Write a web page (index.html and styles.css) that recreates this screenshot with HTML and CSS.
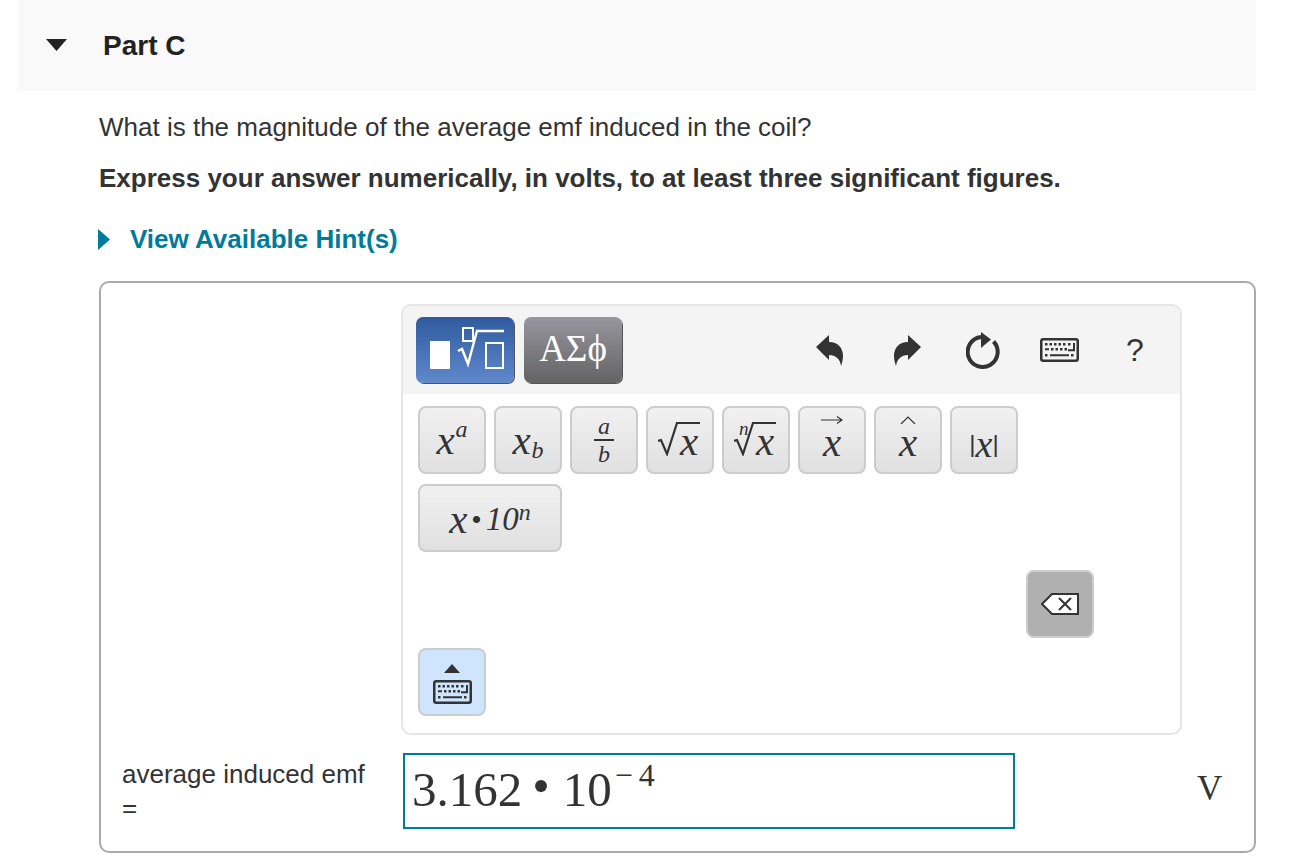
FILE: index.html

```html
<!DOCTYPE html>
<html lang="en">
<head>
  <meta charset="UTF-8" />
  <title>Part C</title>
  <link rel="stylesheet" href="styles.css">
</head>
<body>
  <svg class="defs" width="0" height="0">
    <symbol id="kbd" viewBox="0 0 39 24">
      <rect x="1.250" y="1.250" width="36.500" height="21.500" rx="2" fill="none" stroke="#333" stroke-width="2.500"/>
      <path d="M5 5h2.500v2.500H5zM9.500 5H12v2.500H9.500zM14 5h2.500v2.500H14zM18.500 5H21v2.500h-2.500zM23 5h2.500v2.500H23zM28 5h2.500v2.500H28zM11 10h2.500v2.500H11zM15.500 10H18v2.500h-2.500zM20 10h2.500v2.500H20zM24.500 10H27v2.500h-2.500zM5 16h2.500v2.500H5zM31 16h2.500v2.500H31z" fill="#333"/>
      <path d="M5 11.200h4M28 12.200h6V5M10 17.200h19" fill="none" stroke="#333" stroke-width="2"/>
    </symbol>
  </svg>

  <header class="part-head">
    <svg class="part-arrow" width="21" height="12" viewBox="0 0 21 12"><path d="M0 0h21L10.500 12z" fill="#222"/></svg>
    <h2>Part C</h2>
  </header>

  <main class="part-body">
    <p class="question">What is the magnitude of the average emf induced in the coil?</p>
    <p class="instruction">Express your answer numerically, in volts, to at least three significant figures.</p>
    <div class="hint">
      <svg width="12" height="21" viewBox="0 0 12 21"><path d="M0 0l12 10.500L0 21z" fill="#007b9b"/></svg>
      <span>View Available Hint(s)</span>
    </div>

    <section class="answer-box">
      <div class="palette">
        <div class="toolbar">
          <button class="tab tab-math">
            <svg width="98" height="66" viewBox="0 0 98 66">
              <rect x="14" y="24" width="20" height="28" fill="#fff"/>
              <rect x="47" y="11" width="10" height="13" fill="none" stroke="#fff" stroke-width="2"/>
              <rect x="70" y="26" width="17" height="25" fill="none" stroke="#fff" stroke-width="2"/>
              <path d="M42 34l4-2 6 15 9-33h27" fill="none" stroke="#fff" stroke-width="2.400"/>
            </svg>
          </button>
          <button class="tab tab-greek">ΑΣϕ</button>
          <div class="tools">
            <svg class="tool-undo" width="28" height="32" viewBox="0 0 28 32"><path d="M0 13L13 1v7c9 0 14 6 14 14 0 4-1 7-2 10-1-7-5-11-12-11v5z" fill="#333"/></svg>
            <svg class="tool-redo" width="28" height="32" viewBox="0 0 28 32"><path d="M28 13L15 1v7C6 8 1 14 1 22c0 4 1 7 2 10 1-7 5-11 12-11v5z" fill="#333"/></svg>
            <svg class="tool-reset" width="34" height="38" viewBox="0 0 34 38"><path d="M27.500 9.500A15 15 0 1 1 15 5" fill="none" stroke="#333" stroke-width="4"/><path d="M15 0l10 7.500L15 16z" fill="#333"/></svg>
            <svg class="tool-kbd" width="39" height="24"><use href="#kbd"/></svg>
            <span class="tool-help">?</span>
          </div>
        </div>

        <div class="keys">
          <div class="key-row">
            <button class="key"><span class="mi big">x</span><sup class="mi">a</sup></button>
            <button class="key"><span class="mi big">x</span><sub class="mi">b</sub></button>
            <button class="key"><span class="frac mi"><span class="num">a</span><span>b</span></span></button>
            <button class="key"><span class="root"><svg width="42" height="34" viewBox="0 0 42 34"><path d="M0 19l3-1 6 14L19 1h23" fill="none" stroke="#333" stroke-width="2.200"/></svg><span class="mi big radicand">x</span></span></button>
            <button class="key"><span class="root"><sup class="mi root-n">n</sup><svg width="42" height="34" viewBox="0 0 42 34"><path d="M0 19l3-1 6 14L19 1h23" fill="none" stroke="#333" stroke-width="2.200"/></svg><span class="mi big radicand">x</span></span></button>
            <button class="key"><span class="accent"><svg width="22" height="8" viewBox="0 0 22 8"><path d="M0 4h21M16 0.500l5 3.500-5 3.500" fill="none" stroke="#333" stroke-width="1.200"/></svg><span class="mi big">x</span></span></button>
            <button class="key"><span class="accent"><svg width="16" height="8" viewBox="0 0 16 8"><path d="M1 8l7-7 7 7" fill="none" stroke="#333" stroke-width="1.200"/></svg><span class="mi big">x</span></span></button>
            <button class="key abs"><span class="bar">|</span><span class="mi">x</span><span class="bar">|</span></button>
          </div>
          <div class="key-row">
            <button class="key key-wide"><span class="mi big">x</span><span class="dot">•</span><span class="mi ten">10</span><sup class="mi">n</sup></button>
          </div>
          <div class="key-row key-row-end">
            <button class="key key-delete">
              <svg width="38" height="22" viewBox="0 0 38 22"><path d="M1 11L11 1h26v20H11z" fill="#fff" stroke="#333" stroke-width="2"/><path d="M18 5l12 12M30 5L18 17" stroke="#333" stroke-width="2"/></svg>
            </button>
          </div>
          <div class="key-row">
            <button class="key key-toggle">
              <svg width="16" height="9" viewBox="0 0 16 9"><path d="M8 0l8 9H0z" fill="#333"/></svg>
              <svg width="39" height="24"><use href="#kbd"/></svg>
            </button>
          </div>
        </div>
      </div>

      <div class="answer-row">
        <label class="answer-label">average induced emf =</label>
        <div class="answer-input">3.162<span class="times">•</span>10<sup><span class="minus">−</span>4</sup></div>
        <span class="unit">V</span>
      </div>
    </section>
  </main>
</body>
</html>
```

FILE: styles.css

```css
* {
  margin: 0; padding: 0; box-sizing: border-box;
}
body {
  background: #fff;
  color: #333;
  font-family: 'Liberation Sans', Arial, sans-serif;
  height: 864px;
  overflow: hidden;
}
button {
  font: inherit;
  color: inherit;
}
.defs {
  position: absolute;
}

.part-head {
  display: flex;
  align-items: center;
  margin-left: 18px;
  width: 1238px;
  height: 91px;
  background: #f9f9f9;
  padding-left: 28px;
}
.part-arrow {
  margin-right: 36px;
  margin-top: -2px;
}
.part-head h2 {
  font-size: 28px;
  font-weight: bold;
  color: #222;
}

.part-body {
  margin-left: 99px;
  width: 1157px;
}
.question {
  font-size: 26px;
  line-height: 30px;
  margin-top: 21px;
}
.instruction {
  font-size: 26px;
  line-height: 30px;
  font-weight: bold;
  margin-top: 21px;
}
.hint {
  display: flex;
  align-items: center;
  gap: 20px;
  margin-top: 31px;
  margin-left: -1px;
  height: 30px;
  color: #007b9b;
  font-size: 26px;
  font-weight: bold;
}

.answer-box {
  margin-top: 27px;
  height: 572px;
  border: 2px solid #aaa;
  border-radius: 10px;
  padding: 21px 72px 0 300px;
}

.palette {
  width: 781px;
  height: 431px;
  border: 2px solid #e6e6e6;
  border-radius: 10px;
  overflow: hidden;
}
.toolbar {
  display: flex;
  align-items: center;
  gap: 10px;
  height: 88px;
  padding: 0 0 0 13px;
  background: #f4f4f4;
}
.tab {
  width: 98px;
  height: 66px;
  border: none;
  border-radius: 7px;
  color: #fff;
  display: flex;
  align-items: center;
  justify-content: center;
  box-shadow: 1px 1px 0 #555;
}
.tab-math {
  background: linear-gradient(#2f5a9e, #6089cc);
}
.tab-greek {
  background: linear-gradient(#9896a0, #636363);
  font-family: 'Liberation Serif', serif;
  font-size: 37px;
  padding-bottom: 3px;
}
.tools {
  flex: 1;
  display: flex;
  align-items: center;
  height: 100%;
  padding-left: 184px;
}
.tool-undo { margin-right: 49px; }
.tool-redo { margin-right: 45px; }
.tool-reset { margin-right: 40px; margin-top: 2px; }
.tool-kbd { margin-right: 47px; }
.tool-help {
  font-size: 32px;
  color: #333;
}

.keys {
  padding: 12px 0 0 15px;
  display: flex;
  flex-direction: column;
  gap: 10px;
}
.key-row {
  display: flex;
  gap: 8px;
}
.key-row-end {
  justify-content: flex-end;
  margin-top: 8px;
  padding-right: 86px;
}
.key {
  width: 68px;
  height: 68px;
  border: 2px solid #ccc;
  border-radius: 8px;
  background: linear-gradient(#f1f1f1, #e0e0e0);
  display: flex;
  align-items: center;
  justify-content: center;
  font-family: 'Liberation Serif', serif;
  color: #333;
  font-size: 24px;
}
.mi {
  font-style: italic;
}
.big {
  font-size: 41px;
  line-height: 1;
}
.key sup {
  font-size: 24px;
  line-height: 1;
  align-self: flex-start;
  margin-top: 9px;
  margin-left: 1px;
}
.key sub {
  font-size: 24px;
  line-height: 1;
  align-self: flex-end;
  margin-bottom: 10px;
  margin-left: 1px;
}
.frac {
  display: flex;
  flex-direction: column;
  align-items: center;
  font-size: 24px;
  line-height: 21px;
}
.frac .num {
  border-bottom: 2px solid #333;
  padding: 0 4px 2px;
  margin-bottom: 3px;
}
.root {
  display: flex;
  align-items: flex-start;
  position: relative;
  margin-right: 4px;
  margin-top: 2px;
}
.root svg {
  flex: none;
}
.radicand {
  margin-left: -20px;
  line-height: 38px;
}
.key .root-n {
  position: absolute;
  left: 5px;
  top: -3px;
  font-size: 19px;
  margin: 0;
}
.accent {
  display: flex;
  flex-direction: column;
  align-items: center;
  height: 44px;
  margin-top: -4px;
}
.accent .big {
  line-height: 36px;
}
.abs {
  padding-top: 8px;
}
.abs .mi {
  font-size: 38px;
  line-height: 1;
}
.bar {
  font-family: 'Liberation Sans', Arial, sans-serif;
  font-size: 24px;
}
.key-wide {
  width: 144px;
  padding-top: 3px;
}
.dot {
  font-size: 30px;
  margin: 0 4px;
}
.ten {
  font-size: 33px;
  line-height: 1;
}
.key-wide sup {
  margin-top: 11px;
  margin-left: 0;
}
.key-delete {
  background: #b0b0b0;
}
.key-toggle {
  background: #cfe5ff;
  flex-direction: column;
  gap: 7px;
  padding-top: 3px;
}

.answer-row {
  display: flex;
  align-items: flex-start;
  margin: 18px 0 0 -279px;
  width: 1134px;
}
.answer-label {
  width: 281px;
  font-size: 26px;
  line-height: 34px;
  margin-top: 4px;
  padding-right: 30px;
}
.answer-input {
  width: 612px;
  height: 76px;
  border: 2px solid #007b9b;
  font-family: 'Liberation Serif', serif;
  font-size: 49px;
  line-height: 70px;
  padding-left: 7px;
  white-space: nowrap;
}
.times {
  margin: 0 13px 0 10px;
  font-size: 50px;
  line-height: 0;
  vertical-align: 3px;
}
.answer-input sup {
  font-size: 32px;
  line-height: 0;
  vertical-align: 20px;
  margin-left: 3px;
}
.minus {
  margin-right: 6px;
}
.unit {
  font-family: 'Liberation Serif', serif;
  font-size: 35px;
  margin-left: 182px;
  margin-top: 16px;
}
```
